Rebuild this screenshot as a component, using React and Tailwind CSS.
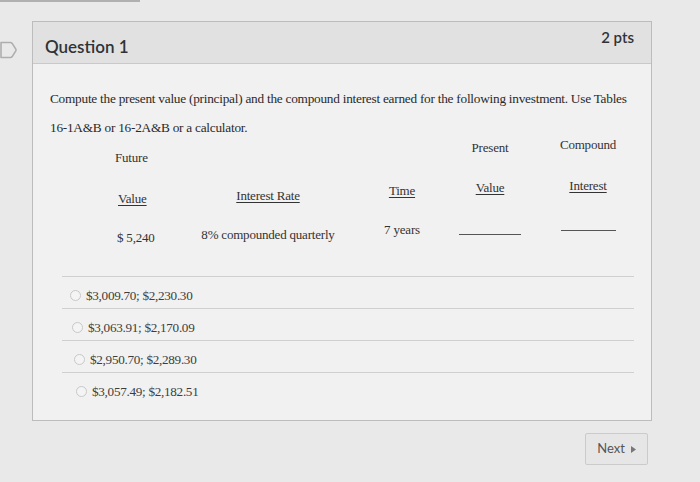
import React from "react";

const serif = { fontFamily: '"Liberation Serif", "Times New Roman", serif' };
const lato = { fontFamily: 'Lato, "Open Sans", sans-serif' };

function Radio() {
  return (
    <span className="inline-block w-[11px] h-[11px] rounded-full border border-[#c8c8c8] bg-[#f4f4f4] shrink-0" />
  );
}

function Option({ text, pad }) {
  return (
    <div className="border-t border-[#d0d0d0]">
      <div className="h-[31px] flex items-center pt-[6px]" style={{ paddingLeft: pad }}>
        <Radio />
        <span className="ml-[5px] text-[13.2px] text-[#3d3d3d] tracking-[-0.3px]" style={serif}>
          {text}
        </span>
      </div>
    </div>
  );
}

export default function App() {
  return (
    <div className="w-[700px] h-[482px] bg-[#e9e9e9] relative overflow-hidden" style={lato}>
      <div className="absolute left-0 top-0 w-[140px] h-[2px] bg-[#b0b0b0]" />
      {/* bookmark icon */}
      <svg className="absolute left-0 top-[41px]" width="18" height="18" viewBox="0 0 18 18">
        <path d="M1 1.5 H10.5 Q11.5 1.5 12.2 2.4 L15.8 8.1 Q16.3 9 15.8 9.9 L12.2 15.6 Q11.5 16.5 10.5 16.5 H1 Z" fill="none" stroke="#aeaeae" strokeWidth="1.6" strokeLinejoin="round" />
      </svg>

      <div className="pt-[21px] pl-[32px]">
        <div className="w-[620px] h-[400px] border border-[#bcbcbc] bg-[#f1f1f1] flex flex-col">
          <div className="h-[42px] bg-[#e1e1e1] border-b border-[#c9c9c9] flex items-center justify-between pl-[12px] pr-[17px]">
            <span className="text-[17px] font-semibold text-[#2f3338] mt-[8px]">Question 1</span>
            <span className="text-[15px] font-semibold text-[#2f3338] mb-[10px]">2 pts</span>
          </div>

          <div className="pl-[17px] pr-[17px] pt-[20px]" style={serif}>
            <p className="text-[13.3px] leading-[29px] text-[#2a2a2a] tracking-[-0.25px] whitespace-nowrap">
              Compute the present value (principal) and the compound interest earned for the following investment. Use Tables
              <br />
              16-1A&amp;B or 16-2A&amp;B or a calculator.
            </p>

            <div className="grid grid-cols-[63px_180px_88px_88px_108px] grid-rows-[41px_41px_41px] text-[13px] text-[#333] tracking-[-0.2px] mt-[-11px] ml-[65px]">
              {/* row 1 */}
              <div className="flex items-center"><span className="translate-y-[6px]">Future</span></div>
              <div />
              <div />
              <div className="flex items-center justify-center"><span className="translate-y-[-4px]">Present</span></div>
              <div className="flex items-center justify-center"><span className="translate-y-[-7px]">Compound</span></div>
              {/* row 2 */}
              <div className="flex items-center pl-[3px]"><span className="underline underline-offset-2 translate-y-[6px]">Value</span></div>
              <div className="flex items-center justify-center"><span className="underline underline-offset-2 translate-y-[3px]">Interest Rate</span></div>
              <div className="flex items-center justify-center"><span className="underline underline-offset-2 translate-y-[-2px]">Time</span></div>
              <div className="flex items-center justify-center"><span className="underline underline-offset-2 translate-y-[-5px]">Value</span></div>
              <div className="flex items-center justify-center"><span className="underline underline-offset-2 translate-y-[-7px]">Interest</span></div>
              {/* row 3 */}
              <div className="flex items-center pl-[2px]"><span className="translate-y-[4px]">$ 5,240</span></div>
              <div className="flex items-center justify-center"><span className="translate-y-[1px]">8% compounded quarterly</span></div>
              <div className="flex items-center justify-center"><span className="translate-y-[-4px]">7 years</span></div>
              <div className="flex items-center justify-center"><span className="block w-[62px] h-px bg-[#555] translate-y-[1px]" /></div>
              <div className="flex items-center justify-center"><span className="block w-[55px] h-px bg-[#555] translate-y-[-3px]" /></div>
            </div>

            <div className="flex flex-col mt-[22px] ml-[12px]">
              <Option text="$3,009.70; $2,230.30" pad={8} />
              <Option text="$3,063.91; $2,170.09" pad={10} />
              <Option text="$2,950.70; $2,289.30" pad={12} />
              <Option text="$3,057.49; $2,182.51" pad={14} />
            </div>
          </div>
        </div>

        <div className="flex justify-end w-[620px] mt-[12px]">
          <button className="w-[63px] h-[32px] bg-[#e6e6e6] border border-[#cbcbcb] rounded-[2px] flex items-center justify-center gap-[6px] text-[13px] text-[#555] mr-[4px]">
            Next
            <svg width="5" height="7" viewBox="0 0 5 7"><path d="M0 0 L5 3.5 L0 7 Z" fill="#777" /></svg>
          </button>
        </div>
      </div>
    </div>
  );
}
